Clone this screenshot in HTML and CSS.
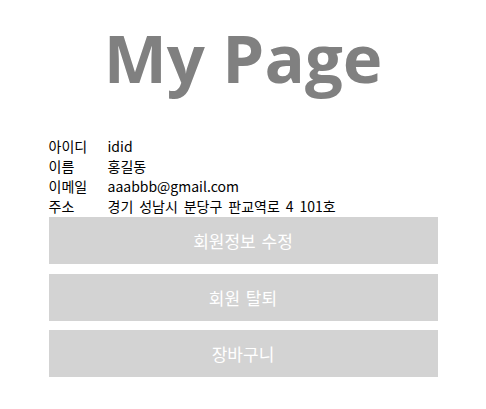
FILE: index.html
```html
<!DOCTYPE html>
<html lang="ko">
<head>
<meta charset="utf-8">
<title>My Page</title>
<link rel="stylesheet" href="styles.css">
</head>
<body>
<h1 class="title">My Page</h1>
<main class="panel">
  <dl class="info">
    <dt>아이디</dt><dd>idid</dd>
    <dt>이름</dt><dd>홍길동</dd>
    <dt>이메일</dt><dd>aaabbb@gmail.com</dd>
    <dt>주소</dt><dd>경기 성남시 분당구 판교역로 4 101호</dd>
  </dl>
  <div class="actions">
    <button class="btn" type="button">회원정보 수정</button>
    <button class="btn" type="button">회원 탈퇴</button>
    <button class="btn" type="button">장바구니</button>
  </div>
</main>
</body>
</html>
```
FILE: styles.css
```css
html, body {
  margin: 0;
  padding: 0;
  background: #ffffff;
}
body {
  font-family: "Noto Sans CJK KR", "Noto Sans", sans-serif;
  color: #000000;
}
.title {
  margin: 24px 0 44.5px;
  font-family: "Open Sans", "Noto Sans CJK KR", sans-serif;
  font-weight: 700;
  font-size: 67px;
  line-height: 67px;
  color: #808080;
  text-align: center;
}
.panel {
  width: 389px;
  margin: 0 auto;
}
.info {
  display: grid;
  grid-template-columns: 59px 1fr;
  margin: 0;
  font-size: 14px;
  line-height: 20px;
  word-spacing: 2px;
}
.info dt, .info dd {
  margin: 0;
  white-space: nowrap;
}
.actions {
  display: flex;
  flex-direction: column;
  gap: 9.5px;
  margin-top: 1.5px;
}
.btn {
  display: flex;
  align-items: center;
  justify-content: center;
  height: 47px;
  border: none;
  padding: 0;
  background: #d3d3d3;
  color: #ffffff;
  font-family: "Noto Sans CJK KR", "Noto Sans", sans-serif;
  font-size: 17px;
  word-spacing: 1px;
}
```
